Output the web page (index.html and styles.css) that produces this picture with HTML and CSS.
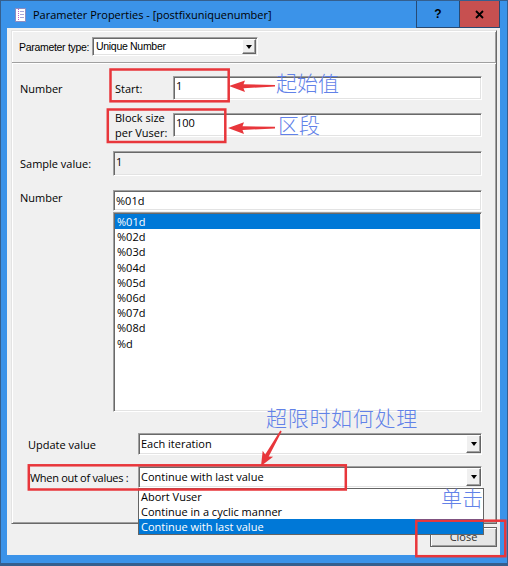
FILE: index.html
```html
<!DOCTYPE html>
<html>
<head>
<meta charset="utf-8">
<title>Parameter Properties</title>
<link rel="stylesheet" href="styles.css">
</head>
<body>
<div class="window">
  <div class="titlebar">
    <svg class="app-icon" width="12" height="14" viewBox="0 0 12 14">
      <rect x="0.5" y="0.5" width="10" height="13" fill="#ffffff" stroke="#8c8cc0"/>
      <line x1="3.5" y1="1" x2="3.5" y2="13" stroke="#c060c8" stroke-width="1" stroke-dasharray="1 1"/>
      <line x1="5" y1="3.5" x2="9" y2="3.5" stroke="#a6a6d8"/>
      <line x1="5" y1="6.5" x2="9" y2="6.5" stroke="#a6a6d8"/>
      <line x1="5" y1="9.5" x2="9" y2="9.5" stroke="#a6a6d8"/>
    </svg>
    <span class="title">Parameter Properties - [postfixuniquenumber]</span>
    <div class="caption-btn help">?</div>
    <div class="caption-btn close">
      <svg width="9" height="9" viewBox="0 0 9 9"><path d="M1 1 L8 8 M8 1 L1 8" stroke="#000" stroke-width="1.8"/></svg>
    </div>
  </div>

  <div class="client">
    <div class="panel">
      <div class="type-row">
        <span class="type-label">Parameter type:</span>
        <div class="combo combo-type sunken">
          <span class="combo-text">Unique Number</span>
          <span class="drop-btn"></span>
        </div>
      </div>
      <div class="separator"></div>

      <div class="props">
        <div class="row row-a">
          <span class="label">Number</span>
          <div class="field-pair">
            <span class="sublabel">Start:</span>
            <div class="edit sunken">1</div>
          </div>
        </div>

        <div class="row row-b">
          <span class="label"></span>
          <div class="field-pair">
            <span class="sublabel two-line">Block size<br>per Vuser:</span>
            <div class="edit sunken">100</div>
          </div>
        </div>

        <div class="row row-c">
          <span class="label">Sample value:</span>
          <div class="edit sunken disabled">1</div>
        </div>

        <div class="row row-d">
          <span class="label">Number</span>
          <div class="format">
            <div class="edit sunken fmt-edit">%01d</div>
            <ul class="listbox sunken">
              <li class="selected">%01d</li>
              <li>%02d</li>
              <li>%03d</li>
              <li>%04d</li>
              <li>%05d</li>
              <li>%06d</li>
              <li>%07d</li>
              <li>%08d</li>
              <li>%d</li>
            </ul>
          </div>
        </div>

        <div class="row2 row-e">
          <span class="label2">Update value</span>
          <div class="combo combo-wide sunken">
            <span class="combo-text">Each iteration</span>
            <span class="drop-btn"></span>
          </div>
        </div>

        <div class="row2 row-f">
          <span class="label2 label-out">When out of values :</span>
          <div class="combo combo-wide sunken">
            <span class="combo-text">Continue with last value</span>
            <span class="drop-btn"></span>
            <ul class="dropdown">
              <li>Abort Vuser</li>
              <li>Continue in a cyclic manner</li>
              <li class="selected">Continue with last value</li>
            </ul>
          </div>
        </div>
      </div>
    </div>

    <div class="footer">
      <div class="button">Close</div>
    </div>
  </div>

  <div class="annotations">
    <svg class="marks" width="508" height="566" viewBox="0 0 508 566">
      <g fill="none" stroke="#e8363b" stroke-width="2.5">
        <rect x="110.5" y="69.5" width="118.2" height="31.8"/>
        <rect x="107.8" y="109.5" width="117.5" height="32.5"/>
        <rect x="28.8" y="465.3" width="317" height="24.2"/>
        <rect x="416.3" y="520.7" width="89" height="35.5"/>
      </g>
      <g fill="#e8363b">
        <polygon points="229,86 245,80.5 243.5,84.2 275,85 275,86.6 243.5,88.2 245,92"/>
        <polygon points="228,128 244,122.2 242.5,126.2 275,126.8 275,128.4 242.5,130 244,134"/>
        <polygon points="261,466 273.1,456.8 268.7,456.6 281.7,431.4 280.3,430.6 265.2,454.6 262.7,450.8"/>
      </g>
    </svg>
    <span class="note note-start">起始值</span>
    <span class="note note-block">区段</span>
    <span class="note note-limit">超限时如何处理</span>
    <span class="note note-click">单击</span>
  </div>
</div>
</body>
</html>
```

FILE: styles.css
```css
* {
  box-sizing: border-box;
}

html, body {
  margin: 0;
  padding: 0;
}

body {
  width: 508px;
  height: 566px;
  overflow: hidden;
  background: #3b93e9;
  font-family: "Open Sans", "Noto Sans", sans-serif;
  font-size: 11px;
  color: #000;
}

.window {
  position: relative;
  width: 508px;
  height: 566px;
  background: #3b93e9;
  border: 1px solid #355f8e;
  border-bottom-width: 3px;
  padding: 0 7px 8px 6px;
  display: flex;
  flex-direction: column;
}

/* ---------- title bar ---------- */
.titlebar {
  height: 27px;
  flex: none;
  display: flex;
  align-items: center;
}

.app-icon {
  flex: none;
  margin-left: 8px;
}

.title {
  margin-left: 6px;
  font-size: 11px;
  color: #000;
  white-space: nowrap;
}

.caption-btn {
  height: 27px;
  align-self: flex-start;
  display: flex;
  align-items: center;
  justify-content: center;
  border-bottom: 1px solid #274a74;
  border-left: 1px solid #274a74;
}

.help {
  margin-left: auto;
  width: 43px;
  background: #3990e6;
  font-family: "Liberation Sans", sans-serif;
  font-weight: bold;
  font-size: 12px;
}

.close {
  width: 41px;
  background: #c75050;
  border-right: 1px solid #274a74;
}

/* ---------- client ---------- */
.client {
  flex: 1;
  background: #f0f0f0;
  padding: 2px 3px 0 4px;
  display: flex;
  flex-direction: column;
}

.panel {
  height: 494px;
  flex: none;
  border: 1px solid;
  border-color: #e3e3e3 #696969 #696969 #e3e3e3;
  box-shadow: inset 1px 1px #ffffff, inset -1px -1px #a0a0a0;
  display: flex;
  flex-direction: column;
}

.type-row {
  height: 31px;
  flex: none;
  display: flex;
  align-items: center;
  padding-left: 7px;
}

.type-label,
.combo-type {
  font-family: "Liberation Sans", sans-serif;
  font-size: 10.5px;
  letter-spacing: -0.3px;
}

.type-label {
  width: 73px;
  flex: none;
  white-space: nowrap;
}

.separator {
  height: 2px;
  flex: none;
  border-top: 1px solid #a0a0a0;
  border-bottom: 1px solid #ffffff;
}

.sunken {
  border: 1px solid;
  border-color: #a0a0a0 #ffffff #ffffff #a0a0a0;
  box-shadow: inset 1px 1px #696969, inset -1px -1px #e3e3e3;
  background: #ffffff;
}

/* ---------- combos ---------- */
.combo {
  position: relative;
  display: flex;
  align-items: stretch;
}

.combo-text {
  flex: 1;
  white-space: nowrap;
  overflow: hidden;
}

.combo-type {
  width: 166px;
  height: 19px;
}

.combo-type .combo-text {
  padding-left: 3px;
  line-height: 17px;
}

.combo-type .drop-btn {
  width: 14px;
  margin: 1px 1px 1px 0;
}

.combo-wide {
  width: 344px;
  height: 22px;
}

.combo-wide .combo-text {
  padding-left: 2px;
  line-height: 20px;
}

.combo-wide .drop-btn {
  width: 15px;
  margin: 1px 0;
}

.drop-btn {
  flex: none;
  display: flex;
  align-items: center;
  justify-content: center;
  background: #f0f0f0;
  border: 1px solid;
  border-color: #ffffff #646464 #646464 #ffffff;
  box-shadow: inset -1px -1px #a0a0a0;
}

.drop-btn::after {
  content: "";
  width: 0;
  height: 0;
  border-left: 3px solid transparent;
  border-right: 3px solid transparent;
  border-top: 4px solid #000;
}

/* ---------- property rows ---------- */
.props {
  flex: 1;
  padding: 12px 14px 0 8px;
  display: flex;
  flex-direction: column;
}

.row {
  display: flex;
  align-items: center;
  flex: none;
}

.label {
  width: 93px;
  flex: none;
  line-height: 15px;
  white-space: nowrap;
}

.field-pair {
  width: 369px;
  height: 100%;
  display: flex;
  align-items: center;
}

.sublabel {
  width: 60px;
  flex: none;
  padding-left: 2px;
  line-height: 15px;
  white-space: nowrap;
}

.edit {
  line-height: 15px;
  padding: 1px 2px;
  white-space: nowrap;
}

.field-pair .edit {
  width: 309px;
  height: 24px;
}

.row-a {
  height: 24px;
}

.row-b {
  height: 24px;
  margin-top: 13px;
}

.row-c {
  height: 25px;
  margin-top: 14px;
}

.row-c .edit {
  width: 369px;
  height: 25px;
  padding-top: 2px;
}

.disabled {
  background: #f0f0f0;
}

.row-d {
  margin-top: 14px;
  align-items: flex-start;
}

.format {
  width: 369px;
}

.fmt-edit {
  height: 21px;
  line-height: 19px;
  padding: 0 2px;
}

.listbox {
  list-style: none;
  margin: 1px 0 0 0;
  padding: 1px;
  height: 200px;
}

.listbox li {
  height: 15.2px;
  line-height: 15.2px;
  padding-left: 2px;
}

.selected {
  background: #0078d7;
  color: #ffffff;
}

.row2 {
  display: flex;
  align-items: center;
  flex: none;
  padding-left: 8px;
}

.row-e {
  height: 22px;
  margin-top: 21px;
}

.row-f {
  height: 22px;
  margin-top: 11px;
}

.label2 {
  width: 110px;
  flex: none;
  white-space: nowrap;
}

.label-out {
  padding-left: 2px;
  letter-spacing: -0.3px;
}

/* open dropdown list overlaying the dialog */
.dropdown {
  position: absolute;
  left: -1px;
  top: calc(100% + 1px);
  width: 346px;
  height: 47px;
  margin: 0;
  padding: 0;
  list-style: none;
  background: #ffffff;
  border: 1px solid #646464;
  z-index: 5;
}

.dropdown li {
  height: 15px;
  line-height: 15px;
  padding-left: 2px;
  white-space: nowrap;
}

/* ---------- footer ---------- */
.footer {
  display: flex;
  justify-content: flex-end;
  padding-top: 3px;
}

.button {
  width: 67px;
  height: 20px;
  line-height: 18px;
  text-align: center;
  background: #e6e6e6;
  border: 1px solid #646464;
  box-shadow: inset 1px 1px #ffffff, inset -1px -1px #a0a0a0;
  color: #333;
}

/* ---------- annotations ---------- */
.annotations {
  position: absolute;
  left: -1px;
  top: -1px;
  width: 508px;
  height: 566px;
  pointer-events: none;
  z-index: 10;
}

.marks {
  position: absolute;
  left: 0;
  top: 0;
}

.note {
  position: absolute;
  font-family: "Noto Sans CJK SC", sans-serif;
  font-weight: 300;
  font-size: 21px;
  line-height: 21px;
  color: #6282e8;
  white-space: nowrap;
}

.note-start {
  left: 276px;
  top: 72px;
}

.note-block {
  left: 278px;
  top: 114px;
}

.note-limit {
  left: 266px;
  top: 407px;
  letter-spacing: 0.7px;
}

.note-click {
  left: 441px;
  top: 487px;
}
```
